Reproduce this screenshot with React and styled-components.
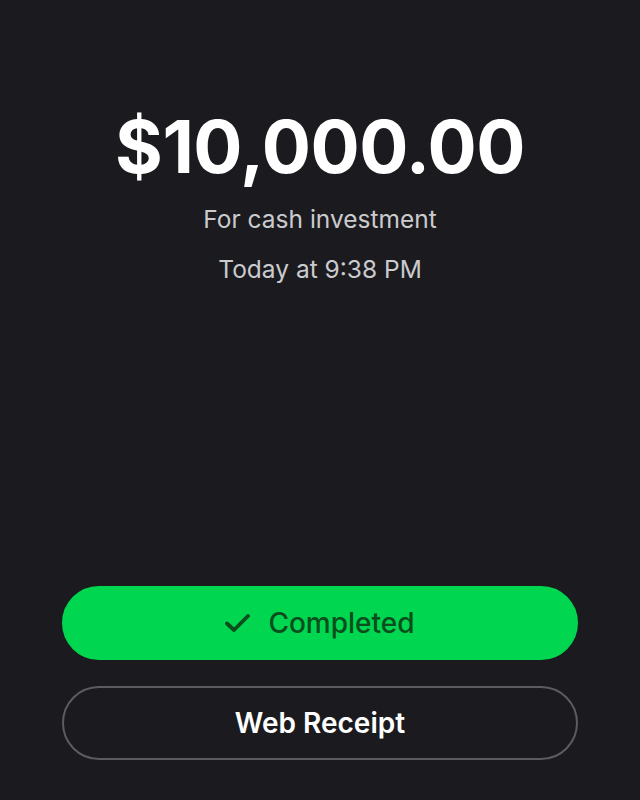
import React from "react";
import styled, { createGlobalStyle } from "styled-components";

const Global = createGlobalStyle`
  html, body { margin: 0; padding: 0; background: #1b1b1f; }
  body { font-family: Inter, "Open Sans", sans-serif; }
`;

const Screen = styled.div`
  width: 640px;
  height: 800px;
  background: #1b1b1f;
  display: flex;
  flex-direction: column;
  align-items: center;
  box-sizing: border-box;
  padding: 100px 62px 0;
`;

const Amount = styled.div`
  color: #ffffff;
  font-size: 73px;
  font-weight: 700;
  letter-spacing: -0.5px;
  line-height: 94px;
`;

const Sub = styled.div`
  color: #cbcbce;
  font-size: 24.5px;
  line-height: 30px;
  margin-top: ${(p) => p.$mt}px;
`;

const Spacer = styled.div`
  flex: 1;
`;

const Button = styled.div`
  width: 100%;
  height: 74px;
  box-sizing: border-box;
  border-radius: 37px;
  display: flex;
  align-items: center;
  justify-content: center;
  gap: 18px;
  font-size: 28px;
  font-weight: ${(p) => (p.$primary ? 500 : 600)};
  background: ${(p) => (p.$primary ? "#00d64f" : "transparent")};
  color: ${(p) => (p.$primary ? "#0b4d1c" : "#ffffff")};
  border: 2px solid ${(p) => (p.$primary ? "#00d64f" : "#5c5c60")};
  margin-bottom: ${(p) => p.$mb}px;
`;

export default function App() {
  return (
    <>
      <Global />
      <Screen>
        <Amount>$10,000.00</Amount>
        <Sub $mt={10}>For cash investment</Sub>
        <Sub $mt={20}>Today at 9:38 PM</Sub>
        <Spacer />
        <Button $primary $mb={26}>
          <svg width="25" height="20" viewBox="0 0 25 20" fill="none">
            <path d="M2 10.5 L9 17 L23 3" stroke="#0b4d1c" strokeWidth="3.8" strokeLinecap="round" strokeLinejoin="round" />
          </svg>
          Completed
        </Button>
        <Button $mb={40}>Web Receipt</Button>
      </Screen>
    </>
  );
}
